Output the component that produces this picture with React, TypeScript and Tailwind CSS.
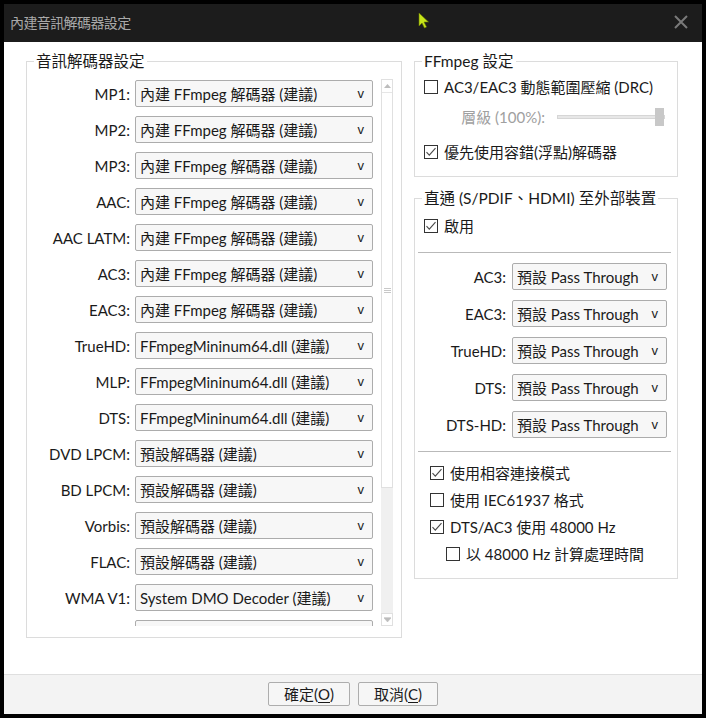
import React from "react";

function Box({ checked }: { checked?: boolean }) {
  return (
    <span className="w-[14px] h-[14px] border border-[#333333] bg-white flex items-center justify-center shrink-0">
      {checked && (
        <svg width="12" height="12" viewBox="0 0 12 12">
          <polyline points="1.5,6.2 4.3,9.2 10.5,2.2" fill="none" stroke="#4a4a4a" strokeWidth="1.1" />
        </svg>
      )}
    </span>
  );
}

function Combo({ text, cls }: { text: string; cls: string }) {
  return (
    <div className={"h-[27px] border border-[#acacac] rounded-[2px] bg-[#f7f7f7] flex items-center pl-[4px] pr-[8px] shrink-0 " + cls}>
      <span className="flex-1 whitespace-nowrap overflow-hidden text-[#1a1a1a] leading-[20px]">{text}</span>
      <span className="text-[13px] leading-[14px] text-[#222] font-['Liberation_Sans',sans-serif]">v</span>
    </div>
  );
}

const BUILTIN = "內建 FFmpeg 解碼器 (建議)";
const DLL = "FFmpegMininum64.dll (建議)";
const DEF = "預設解碼器 (建議)";
const DMO = "System DMO Decoder (建議)";

const leftRows: [string, string][] = [
  ["MP1:", BUILTIN],
  ["MP2:", BUILTIN],
  ["MP3:", BUILTIN],
  ["AAC:", BUILTIN],
  ["AAC LATM:", BUILTIN],
  ["AC3:", BUILTIN],
  ["EAC3:", BUILTIN],
  ["TrueHD:", DLL],
  ["MLP:", DLL],
  ["DTS:", DLL],
  ["DVD LPCM:", DEF],
  ["BD LPCM:", DEF],
  ["Vorbis:", DEF],
  ["FLAC:", DEF],
  ["WMA V1:", DMO],
];

const ptRows = ["AC3:", "EAC3:", "TrueHD:", "DTS:", "DTS-HD:"];

export default function App() {
  return (
    <div className="w-[706px] h-[718px] bg-black p-[4px] flex flex-col font-['Lato','Noto_Sans_CJK_TC',sans-serif] text-[15px] text-[#1a1a1a]">
      {/* Title bar */}
      <div className="relative h-[38px] bg-[#1c1c1c] flex items-center justify-between pl-[6px] pr-[14px] shrink-0">
        <span className="text-[14px] text-[#a9a9a9] leading-[20px] tracking-[-0.6px] font-['Noto_Sans_CJK_TC',sans-serif] -mt-[3px]">內建音訊解碼器設定</span>
        <svg width="14" height="14" viewBox="0 0 14 14" className="-mt-[3px]">
          <path d="M1 1 L13 13 M13 1 L1 13" stroke="#7a7a7a" strokeWidth="2" />
        </svg>
        <svg className="absolute left-[414px] top-[8px]" width="12" height="18" viewBox="0 0 12 18">
          <path d="M1 1 L1 14 L4 11 L6.5 16 L8.5 15 L6 10 L10.5 10 Z" fill="#c6e41a" stroke="#6a7a00" strokeWidth="0.6" />
        </svg>
      </div>

      {/* Body */}
      <div className="flex-1 bg-white flex gap-[12px] pl-[22px] pt-[9px]">
        {/* Left group */}
        <fieldset className="w-[376px] h-[587px] border border-[#dcdcdc] pl-[7px] pr-[7px] pt-[8px] shrink-0">
          <legend className="px-[2px] leading-[20px] text-[15.5px]">音訊解碼器設定</legend>
          <div className="flex h-[547px]">
            <div className="w-[347px] h-[547px] overflow-hidden flex flex-col gap-[9px] pt-[1px]">
              {leftRows.map(([label, val]) => (
                <div key={label} className="flex items-center gap-[5px] shrink-0">
                  <span className="w-[96px] text-right whitespace-nowrap leading-[20px]">{label}</span>
                  <Combo text={val} cls="w-[238px]" />
                </div>
              ))}
              <div className="flex items-start gap-[5px] shrink-0 h-[27px]">
                <span className="w-[96px]" />
                <div className="w-[238px] h-[27px] border border-[#acacac] rounded-[2px] bg-[#f7f7f7] flex items-start pl-[4px] pr-[8px] pt-[3px] shrink-0">
                  <span className="flex-1 whitespace-nowrap overflow-hidden text-[#1a1a1a] leading-[20px]">{DMO}</span>
                </div>
              </div>
            </div>
            {/* Scrollbar */}
            <div className="w-[12px] h-[547px] flex flex-col bg-[#f0f0f0]">
              <div className="h-[409px] border border-[#e0e0e0] bg-white flex flex-col">
                <div className="h-[13px] border-b border-[#e6e6e6] flex items-center justify-center">
                  <svg width="7" height="4" viewBox="0 0 7 4"><path d="M0 4 L3.5 0 L7 4 Z" fill="#bdbdbd" /></svg>
                </div>
                <div className="flex-1 flex items-center justify-center">
                  <svg width="7" height="5" viewBox="0 0 7 5">
                    <path d="M0 0.5 H7 M0 2.5 H7 M0 4.5 H7" stroke="#c8c8c8" strokeWidth="1" />
                  </svg>
                </div>
              </div>
              <div className="flex-1" />
              <div className="h-[13px] border border-[#e0e0e0] bg-white flex items-center justify-center">
                <svg width="7" height="5" viewBox="0 0 7 5"><path d="M0 0.5 H7 M0 1 L3.5 5 L7 1 Z" fill="#bdbdbd" stroke="#bdbdbd" strokeWidth="0.5" /></svg>
              </div>
            </div>
          </div>
        </fieldset>

        {/* Right column */}
        <div className="w-[264px] flex flex-col gap-[11px] shrink-0">
          <fieldset className="h-[126px] border border-[#dcdcdc] pl-[7px] pr-[6px] shrink-0">
            <legend className="px-[2px] leading-[20px] text-[15.5px]">FFmpeg 設定</legend>
            <div className="flex flex-col">
              <div className="h-[22px] mt-[5px] flex items-center gap-[6px] pl-[2px]">
                <Box />
                <span className="whitespace-nowrap leading-[20px]">AC3/EAC3 動態範圍壓縮 (DRC)</span>
              </div>
              <div className="h-[22px] mt-[8px] flex items-center">
                <span className="w-[123px] text-right text-[#a0a0a0] whitespace-nowrap leading-[20px]">層級 (100%):</span>
                <div className="relative ml-[12px] w-[108px] h-[18px] flex items-center">
                  <div className="w-full h-[4px] bg-[#e7e7e7] border border-[#d6d6d6]" />
                  <div className="absolute right-[1px] top-0 w-[9px] h-[18px] bg-[#c8c8c8]" />
                </div>
              </div>
              <div className="h-[22px] mt-[13px] flex items-center gap-[6px] pl-[2px]">
                <Box checked />
                <span className="whitespace-nowrap leading-[20px]">優先使用容錯(浮點)解碼器</span>
              </div>
            </div>
          </fieldset>

          <fieldset className="h-[391px] border border-[#dcdcdc] pl-[7px] pr-[6px] shrink-0">
            <legend className="px-[2px] leading-[20px] text-[15.5px]">直通 (S/PDIF、HDMI) 至外部裝置</legend>
            <div className="flex flex-col">
              <div className="h-[22px] mt-[7px] flex items-center gap-[6px] pl-[2px]">
                <Box checked />
                <span className="whitespace-nowrap leading-[20px]">啟用</span>
              </div>
              <div className="h-px bg-[#b9b9b9] mt-[15px] -ml-[4px]" />
              <div className="flex flex-col gap-[10px] mt-[10px]">
                {ptRows.map((l) => (
                  <div key={l} className="flex items-center justify-end gap-[6px] pr-[4px]">
                    <span className="whitespace-nowrap leading-[20px]">{l}</span>
                    <Combo text="預設 Pass Through" cls="w-[155px]" />
                  </div>
                ))}
              </div>
              <div className="h-px bg-[#b9b9b9] mt-[13px] -ml-[4px]" />
              <div className="flex flex-col gap-[3px] mt-[9px]">
                <div className="h-[24px] flex items-center gap-[6px] pl-[8px]">
                  <Box checked />
                  <span className="whitespace-nowrap leading-[20px]">使用相容連接模式</span>
                </div>
                <div className="h-[24px] flex items-center gap-[6px] pl-[8px]">
                  <Box />
                  <span className="whitespace-nowrap leading-[20px]">使用 IEC61937 格式</span>
                </div>
                <div className="h-[24px] flex items-center gap-[6px] pl-[8px]">
                  <Box checked />
                  <span className="whitespace-nowrap leading-[20px]">DTS/AC3 使用 48000 Hz</span>
                </div>
                <div className="h-[24px] flex items-center gap-[6px] pl-[24px]">
                  <Box />
                  <span className="whitespace-nowrap leading-[20px]">以 48000 Hz 計算處理時間</span>
                </div>
              </div>
            </div>
          </fieldset>
        </div>
      </div>

      {/* Footer */}
      <div className="h-[40px] border-t border-[#dfdfdf] bg-[#f3f3f3] flex justify-center items-start pt-[7px] gap-[8px] shrink-0">
        <button className="w-[82px] h-[24px] border border-[#adadad] rounded-[2px] bg-[#f6f6f6] flex items-center justify-center leading-[20px]">
          確定(<span className="underline underline-offset-2">O</span>)
        </button>
        <button className="w-[80px] h-[24px] border border-[#adadad] rounded-[2px] bg-[#f6f6f6] flex items-center justify-center leading-[20px]">
          取消(<span className="underline underline-offset-2">C</span>)
        </button>
      </div>
    </div>
  );
}
